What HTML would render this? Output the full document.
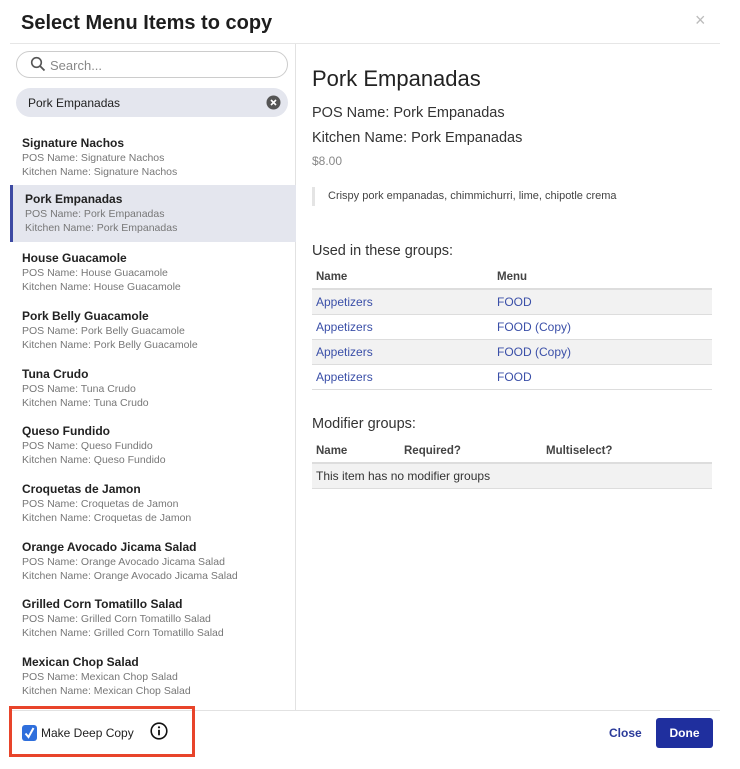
<!DOCTYPE html>
<html><head><style>
*{box-sizing:border-box;margin:0;padding:0}
body{width:740px;height:769px;background:#fff;font-family:"Liberation Sans",sans-serif;color:#222;position:relative;overflow:hidden}
.a{position:absolute}
.item{position:absolute;left:10px;width:286px;height:57px;padding-left:12px}
.item b{display:block;font-size:12px;margin-top:3px;color:#222;line-height:16px}
.item span{display:block;font-size:10.5px;color:#777;line-height:14px}
.sel{background:#e4e6ee;border-left:3px solid #3d4aa3;padding-left:12px}
.sel b{margin-top:6px}
.row{position:absolute;left:312px;width:400px;height:25px;border-bottom:1px solid #ddd;font-size:12px;line-height:25px}
.g{background:#f2f2f2}
.row span{position:absolute;left:4px}
.lk{color:#3a4fa8}
</style></head><body>
<div class="a" style="left:21px;top:12px;font-size:20px;font-weight:bold;color:#1e1e1e">Select Menu Items to copy</div>
<div class="a" style="left:695px;top:10px;font-size:18px;color:#bbb">×</div>
<div class="a" style="left:10px;top:43px;width:710px;height:1px;background:#e6e6e6"></div>
<div class="a" style="left:295px;top:44px;width:1px;height:666px;background:#e2e2e2"></div>
<div class="a" style="left:16px;top:51px;width:272px;height:27px;border:1px solid #ccc;border-radius:14px"></div>
<svg class="a" style="left:30px;top:56px" width="16" height="16" viewBox="0 0 16 16"><circle cx="6.5" cy="6.5" r="4.8" fill="none" stroke="#555" stroke-width="1.6"/><path d="M10 10l4.5 4.5" stroke="#555" stroke-width="1.8"/></svg>
<div class="a" style="left:50px;top:58px;font-size:13px;color:#888">Search...</div>
<div class="a" style="left:16px;top:88px;width:272px;height:29px;background:#e4e6ee;border-radius:15px"></div>
<div class="a" style="left:28px;top:96px;font-size:12px;color:#222">Pork Empanadas</div>
<svg class="a" style="left:266px;top:95px" width="15" height="15" viewBox="0 0 15 15"><circle cx="7.5" cy="7.5" r="7" fill="#555"/><path d="M5 5l5 5M10 5l-5 5" stroke="#fff" stroke-width="1.6"/></svg>

<div class="item" style="top:132px"><b>Signature Nachos</b><span>POS Name: Signature Nachos</span><span>Kitchen Name: Signature Nachos</span></div>
<div class="item sel" style="top:185px;height:57px"><b>Pork Empanadas</b><span>POS Name: Pork Empanadas</span><span>Kitchen Name: Pork Empanadas</span></div>
<div class="item" style="top:247px"><b>House Guacamole</b><span>POS Name: House Guacamole</span><span>Kitchen Name: House Guacamole</span></div>
<div class="item" style="top:305px"><b>Pork Belly Guacamole</b><span>POS Name: Pork Belly Guacamole</span><span>Kitchen Name: Pork Belly Guacamole</span></div>
<div class="item" style="top:363px"><b>Tuna Crudo</b><span>POS Name: Tuna Crudo</span><span>Kitchen Name: Tuna Crudo</span></div>
<div class="item" style="top:420px"><b>Queso Fundido</b><span>POS Name: Queso Fundido</span><span>Kitchen Name: Queso Fundido</span></div>
<div class="item" style="top:478px"><b>Croquetas de Jamon</b><span>POS Name: Croquetas de Jamon</span><span>Kitchen Name: Croquetas de Jamon</span></div>
<div class="item" style="top:536px"><b>Orange Avocado Jicama Salad</b><span>POS Name: Orange Avocado Jicama Salad</span><span>Kitchen Name: Orange Avocado Jicama Salad</span></div>
<div class="item" style="top:593px"><b>Grilled Corn Tomatillo Salad</b><span>POS Name: Grilled Corn Tomatillo Salad</span><span>Kitchen Name: Grilled Corn Tomatillo Salad</span></div>
<div class="item" style="top:651px"><b>Mexican Chop Salad</b><span>POS Name: Mexican Chop Salad</span><span>Kitchen Name: Mexican Chop Salad</span></div>

<div class="a" style="left:312px;top:66px;font-size:22px;color:#222">Pork Empanadas</div>
<div class="a" style="left:312px;top:105px;font-size:14.5px;color:#333">POS Name: Pork Empanadas</div>
<div class="a" style="left:312px;top:130px;font-size:14.5px;color:#333">Kitchen Name: Pork Empanadas</div>
<div class="a" style="left:312px;top:154px;font-size:12px;color:#888">$8.00</div>
<div class="a" style="left:312px;top:187px;width:3px;height:19px;background:#e4e4e4"></div>
<div class="a" style="left:328px;top:190px;font-size:11px;color:#444">Crispy pork empanadas, chimmichurri, lime, chipotle crema</div>

<div class="a" style="left:312px;top:243px;font-size:14.5px;color:#333">Used in these groups:</div>
<div class="row" style="top:265px;font-weight:bold;font-size:11.5px;color:#444;border-bottom:2px solid #ddd"><span>Name</span><span style="left:185px">Menu</span></div>
<div class="row g lk" style="top:290px"><span>Appetizers</span><span style="left:185px">FOOD</span></div>
<div class="row lk" style="top:315px"><span>Appetizers</span><span style="left:185px">FOOD (Copy)</span></div>
<div class="row g lk" style="top:340px"><span>Appetizers</span><span style="left:185px">FOOD (Copy)</span></div>
<div class="row lk" style="top:365px"><span>Appetizers</span><span style="left:185px">FOOD</span></div>

<div class="a" style="left:312px;top:416px;font-size:14.5px;color:#333">Modifier groups:</div>
<div class="row" style="top:439px;font-weight:bold;font-size:11.5px;color:#444;border-bottom:2px solid #ddd"><span>Name</span><span style="left:92px">Required?</span><span style="left:234px">Multiselect?</span></div>
<div class="row g" style="top:464px;color:#333"><span>This item has no modifier groups</span></div>

<div class="a" style="left:10px;top:710px;width:710px;height:1px;background:#e2e2e2"></div>
<div class="a" style="left:9px;top:706px;width:186px;height:51px;border:3px solid #e8442a"></div>
<div class="a" style="left:22px;top:725px;width:15px;height:16px;background:#2f6fdc;border-radius:3px"></div>
<svg class="a" style="left:23px;top:726px" width="13" height="14" viewBox="0 0 13 14"><path d="M2.5 7.5l3 3.5 5-9" fill="none" stroke="#fff" stroke-width="2"/></svg>
<div class="a" style="left:41px;top:726px;font-size:12px;color:#222">Make Deep Copy</div>
<svg class="a" style="left:150px;top:722px" width="18" height="18" viewBox="0 0 18 18"><circle cx="9" cy="9" r="7.8" fill="none" stroke="#111" stroke-width="1.6"/><circle cx="9" cy="5.3" r="1.1" fill="#111"/><path d="M9 7.8v5.5" stroke="#111" stroke-width="1.8"/></svg>
<div class="a" style="left:609px;top:726px;font-size:12px;font-weight:bold;color:#2a3a9a">Close</div>
<div class="a" style="left:656px;top:718px;width:57px;height:30px;background:#1f2f9e;border-radius:3px;color:#fff;font-size:12px;font-weight:bold;text-align:center;line-height:30px">Done</div>
</body></html>
